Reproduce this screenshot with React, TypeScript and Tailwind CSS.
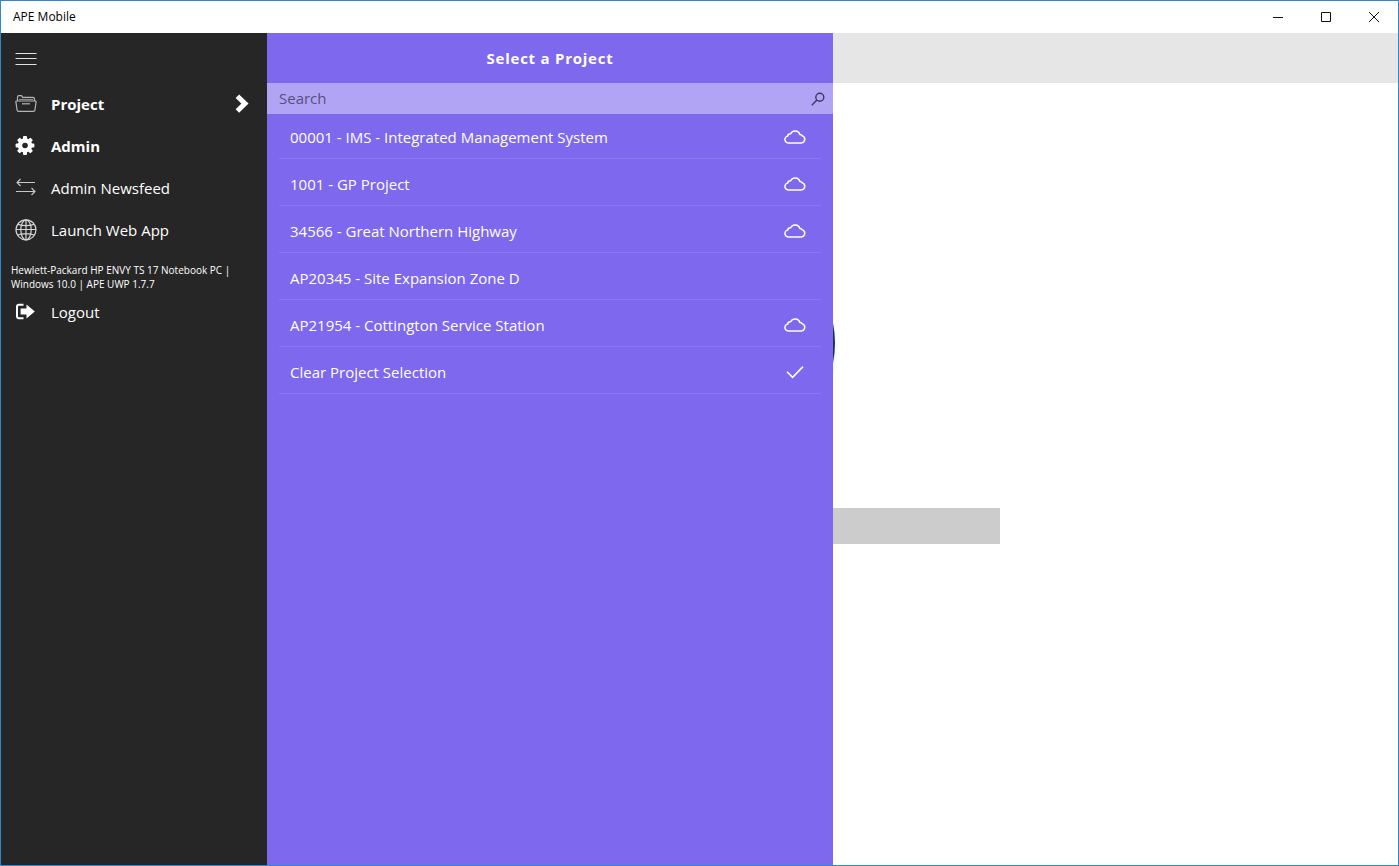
import { useState } from "react";
import type { ReactNode } from "react";

const projects = [
  { name: "00001 - IMS - Integrated Management System", status: "cloud" },
  { name: "1001 - GP Project", status: "cloud" },
  { name: "34566 - Great Northern Highway", status: "cloud" },
  { name: "AP20345 - Site Expansion Zone D", status: "none" },
  { name: "AP21954 - Cottington Service Station", status: "cloud" },
  { name: "Clear Project Selection", status: "check" },
];

function FolderIcon() {
  return (
    <svg viewBox="0 0 22 22" className="size-[22px]" fill="none" stroke="#b4b4b4" strokeWidth="1.2" strokeLinejoin="round">
      <path d="M2.5 8V4.2Q2.5 2.6 3.7 2.6H6Q6.8 2.6 7.2 3.4L7.7 4.4H18Q19.5 4.4 19.5 6V8" />
      <path d="M4 6.4h14" strokeWidth="0.8" />
      <path d="M1.6 8H20.4Q21.2 8 21.1 8.8L19.9 17.1Q19.7 18.4 18.4 18.4H3.6Q2.3 18.4 2.1 17.1L0.9 8.8Q0.8 8 1.6 8Z" />
      <path d="M7 10.8h8" />
    </svg>
  );
}

function GearIcon() {
  return (
    <svg viewBox="0 0 22 22" className="size-[22px]">
      <g fill="#fff" transform="translate(10 10.5)">
        {[0, 45, 90, 135].map((angle) => (
          <rect key={angle} x="-2" y="-9.4" width="4" height="18.8" rx="1" transform={`rotate(${angle})`} />
        ))}
        <circle r="7.2" />
        <circle r="2.8" fill="#262626" />
      </g>
    </svg>
  );
}

function SwapIcon() {
  return (
    <svg viewBox="0 0 22 22" className="size-[22px]" fill="none" stroke="#c8c8c8" strokeWidth="1.1">
      <path d="M20 5.5H2M5.5 2L2 5.5L5.5 9" />
      <path d="M1 14.5H20M16.5 11L20 14.5L16.5 18" />
    </svg>
  );
}

function GlobeIcon() {
  return (
    <svg viewBox="0 0 22 22" className="size-[22px]" fill="none" stroke="#d4d4d4" strokeWidth="1.2">
      <circle cx="11" cy="10.8" r="10" />
      <ellipse cx="11" cy="10.8" rx="5.2" ry="10" />
      <path d="M11 1v20M1 10.5h20M3 5.4q8 2.6 16 0M3 16q8 -2.6 16 0" />
    </svg>
  );
}

function LogoutIcon() {
  return (
    <svg viewBox="0 0 22 22" className="size-[22px]">
      <path d="M8.5 3.8H4Q2 3.8 2 5.8V15.2Q2 17.2 4 17.2H8.5" fill="none" stroke="#fff" strokeWidth="2" />
      <path d="M5.6 7.4H11.5V3.6L19.8 10.5L11.5 17.4V13.6H5.6Z" fill="#fff" />
    </svg>
  );
}

function StatusIcon({ status }: { status: string }) {
  if (status === "cloud") {
    return (
      <svg viewBox="0 0 22 16" className="h-4 w-[22px]" fill="none" stroke="#fff" strokeWidth="1.5" strokeLinejoin="round">
        <path d="M5.2 13.9H17.4A3.6 3.6 0 0 0 18.3 6.9Q17.6 5.4 15.9 5.5A5 5 0 0 0 6.7 4.7Q3.9 4.5 3.7 7.1A3.4 3.4 0 0 0 5.2 13.9Z" />
      </svg>
    );
  }
  if (status === "check") {
    return (
      <svg viewBox="0 0 22 16" className="h-4 w-[22px]" fill="none" stroke="#fff" strokeWidth="1.6">
        <path d="M3 7.8L8.6 13.4L19 2.6" />
      </svg>
    );
  }
  return null;
}

function MenuItem({ icon, label, bold, children }: { icon: ReactNode; label: string; bold?: boolean; children?: ReactNode }) {
  return (
    <button type="button" className="flex h-[42px] w-full items-center px-3.5 text-left">
      {icon}
      <span className={bold ? "ml-3.5 flex-1 font-bold" : "ml-3.5 flex-1"}>{label}</span>
      {children}
    </button>
  );
}

export default function App() {
  const [search, setSearch] = useState("");
  const visible = projects.filter((p) => p.name.toLowerCase().includes(search.toLowerCase()));

  return (
    <div className="flex min-h-screen flex-col border border-[#2f87d0] bg-white font-['Open_Sans','Noto_Sans',sans-serif] text-[15px]">
      <header className="flex h-8 items-center justify-between pl-3 text-xs text-black">
        <span>APE Mobile</span>
        <div className="flex">
          <button type="button" aria-label="Minimize" className="flex h-8 w-12 items-center justify-center">
            <svg viewBox="0 0 12 12" className="size-3" stroke="#111"><path d="M1 6.5h10" /></svg>
          </button>
          <button type="button" aria-label="Maximize" className="flex h-8 w-12 items-center justify-center">
            <svg viewBox="0 0 12 12" className="size-3" stroke="#111" fill="none"><path d="M1.5 1.5h9v9h-9z" /></svg>
          </button>
          <button type="button" aria-label="Close" className="flex h-8 w-12 items-center justify-center">
            <svg viewBox="0 0 12 12" className="size-3" stroke="#111"><path d="M1 1l10 10M11 1L1 11" /></svg>
          </button>
        </div>
      </header>

      <div className="flex flex-1">
        <nav className="w-[266px] shrink-0 bg-[#262626] text-white">
          <button type="button" aria-label="Menu" className="flex h-[50px] items-center px-3.5">
            <svg viewBox="0 0 22 22" className="size-[22px]" stroke="#e2e2e2"><path d="M0.5 6.5h21M0.5 11.5h21M0.5 17.5h21" /></svg>
          </button>
          <MenuItem icon={<FolderIcon />} label="Project" bold>
            <svg viewBox="0 0 18 20" className="h-5 w-[18px]" fill="none" stroke="#fff" strokeWidth="5">
              <path d="M2.4 2.2L10 9.6L2.4 17" />
            </svg>
          </MenuItem>
          <MenuItem icon={<GearIcon />} label="Admin" bold />
          <MenuItem icon={<SwapIcon />} label="Admin Newsfeed" />
          <MenuItem icon={<GlobeIcon />} label="Launch Web App" />
          <p className="px-2.5 pt-3 text-[10px] leading-[14px]">
            Hewlett-Packard HP ENVY TS 17 Notebook PC |<br />
            Windows 10.0 | APE UWP 1.7.7
          </p>
          <MenuItem icon={<LogoutIcon />} label="Logout" />
        </nav>

        <section className="w-[566px] shrink-0 bg-[#7d68ee] text-white">
          <h1 className="flex h-[50px] items-center justify-center font-bold tracking-wider">Select a Project</h1>
          <div className="flex h-[31px] items-center bg-[#b1a4f4] pr-2 pl-3">
            <input
              type="text"
              aria-label="Search projects"
              placeholder="Search"
              value={search}
              onChange={(e) => setSearch(e.target.value)}
              className="min-w-0 flex-1 bg-transparent text-[#333] outline-none placeholder:text-[#574f80]"
            />
            <button type="button" aria-label="Search">
              <svg viewBox="0 0 14 14" className="size-3.5" fill="none" stroke="#3d3760" strokeWidth="1.4">
                <circle cx="8.8" cy="5.2" r="4" />
                <path d="M5.9 8.1L0.8 13.2" />
              </svg>
            </button>
          </div>
          <ul className="px-3">
            {visible.map((p) => (
              <li key={p.name} className="h-[47px] border-b border-[#8b78f0] first:h-[45px]">
                <button type="button" className="flex h-full w-full items-end justify-between pr-[15px] pb-2.5 pl-[11px] text-left">
                  <span>{p.name}</span>
                  <span className="pb-[3px]">
                    <StatusIcon status={p.status} />
                  </span>
                </button>
              </li>
            ))}
          </ul>
        </section>

        <main className="relative flex-1 overflow-hidden">
          <div className="h-[50px] bg-[#e6e6e6]" />
          {/* edge of the round logo that slides under the project panel */}
          <div className="absolute top-[210px] -left-[198px] size-[200px] rounded-full bg-[#1d3349] shadow-md" />
          <div className="mt-[425px] h-9 w-[167px] bg-[#cccccc]" />
        </main>
      </div>
    </div>
  );
}
